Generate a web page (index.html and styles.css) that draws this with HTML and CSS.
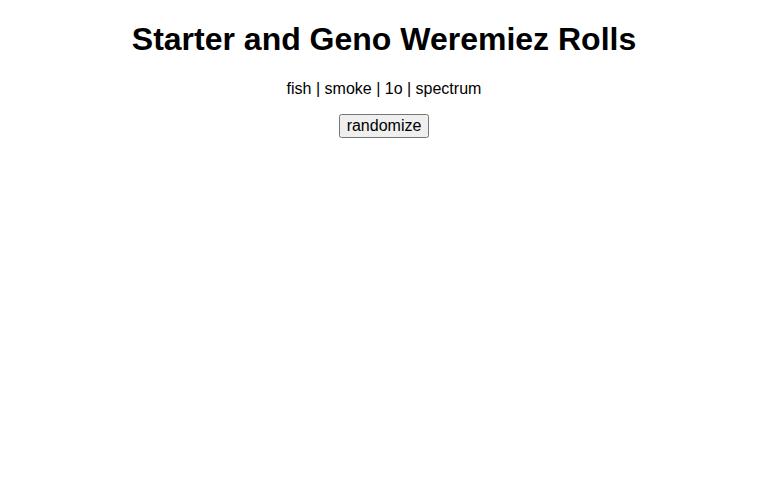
FILE: index.html
```html
<!DOCTYPE html>
<html>
<head>
<meta charset="utf-8">
<link rel="stylesheet" href="styles.css">
</head>
<body>
<h1 class="title">Starter and Geno Weremiez Rolls</h1>
<p class="rolls">fish | smoke | 1o | spectrum</p>
<button class="btn">randomize</button>
</body>
</html>
```
FILE: styles.css
```css
body {
  margin: 0 8px 8px;
  font-family: "Liberation Sans", Arial, sans-serif;
  text-align: center;
  color: #000;
  background: #fff;
}
.title {
  font-size: 32px;
  font-weight: bold;
  margin: 0.67em 0;
}
.rolls {
  font-size: 16px;
  margin: 16px 0;
}
.btn {
  font-family: "Liberation Sans", Arial, sans-serif;
  font-size: 16px;
}
```
